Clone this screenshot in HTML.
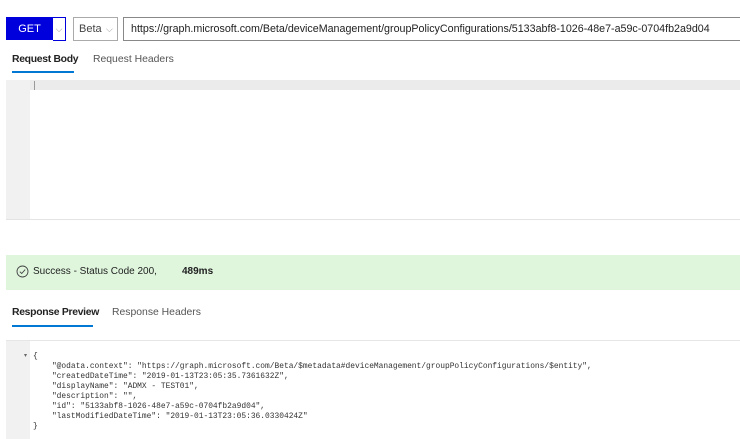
<!DOCTYPE html>
<html><head><style>
body{margin:0;width:740px;height:439px;overflow:hidden;background:#fff;font-family:"Liberation Sans",sans-serif;position:relative}
.a{position:absolute;white-space:nowrap}
.mono{font-family:"Liberation Mono",monospace;font-size:7.9px;color:#333;white-space:pre;line-height:10px}
</style></head><body>
<div class="a" style="left:6px;top:17px;width:47px;height:23px;background:#0000dd;color:#fff;font-size:11px;line-height:24px;text-align:center">GET</div>
<div class="a" style="left:53px;top:17px;width:12px;height:22px;border:1px solid #0000dd;border-left:none;color:#999;font-size:9px;line-height:22px;text-align:center">⌵</div>
<div class="a" style="left:73px;top:17px;width:43px;height:22px;border:1px solid #aaa;font-size:11px;line-height:23px;color:#444"><span style="margin-left:5px">Beta</span><span style="position:absolute;left:32px;color:#999;font-size:9px">⌵</span></div>
<div class="a" style="left:123px;top:17px;width:630px;height:22px;border:1px solid #888;font-size:10.7px;line-height:23px;color:#222;overflow:hidden"><span style="margin-left:7px">https://graph.microsoft.com/Beta/deviceManagement/groupPolicyConfigurations/5133abf8-1026-48e7-a59c-0704fb2a9d04</span></div>
<div class="a" style="left:12px;top:54px;font-size:10.4px;color:#222;font-weight:bold;letter-spacing:-0.3px">Request Body</div>
<div class="a" style="left:12px;top:71px;width:62px;height:2px;background:#0078d4"></div>
<div class="a" style="left:93px;top:54px;font-size:10.4px;color:#555">Request Headers</div>
<div class="a" style="left:6px;top:80px;width:734px;height:139px;border-bottom:1px solid #e3e3e3"></div>
<div class="a" style="left:6px;top:80px;width:734px;height:10px;background:#ebebeb"></div>
<div class="a" style="left:6px;top:80px;width:24px;height:139px;background:#f1f1f1"></div>
<div class="a" style="left:34px;top:81px;width:1px;height:9px;background:#999"></div>
<div class="a" style="left:6px;top:255px;width:734px;height:35px;background:#dff6dd"></div>
<svg class="a" style="left:16px;top:265px" width="13" height="13" viewBox="0 0 13 13"><circle cx="6.5" cy="6.5" r="5.5" fill="none" stroke="#444" stroke-width="0.9"/><path d="M3.8 6.7 L5.7 8.5 L9.2 4.6" fill="none" stroke="#444" stroke-width="0.9"/></svg>
<div class="a" style="left:33px;top:266px;font-size:10px;color:#222">Success - Status Code 200,</div>
<div class="a" style="left:182px;top:266px;font-size:10px;color:#222;font-weight:bold">489ms</div>
<div class="a" style="left:12px;top:307px;font-size:10.4px;color:#222;font-weight:bold;letter-spacing:-0.3px">Response Preview</div>
<div class="a" style="left:12px;top:325px;width:81px;height:2px;background:#0078d4"></div>
<div class="a" style="left:112px;top:307px;font-size:10.4px;color:#555">Response Headers</div>
<div class="a" style="left:6px;top:340px;width:734px;height:1px;background:#e6e6e6"></div>
<div class="a" style="left:6px;top:341px;width:24px;height:98px;background:#f1f1f1"></div>
<div class="a" style="left:24px;top:352px;font-size:6px;color:#666">▾</div>
<div class="a mono" style="left:33px;top:352px">{
    "@odata.context": "https://graph.microsoft.com/Beta/$metadata#deviceManagement/groupPolicyConfigurations/$entity",
    "createdDateTime": "2019-01-13T23:05:35.7361632Z",
    "displayName": "ADMX - TEST01",
    "description": "",
    "id": "5133abf8-1026-48e7-a59c-0704fb2a9d04",
    "lastModifiedDateTime": "2019-01-13T23:05:36.0330424Z"
}</div>
</body></html>
